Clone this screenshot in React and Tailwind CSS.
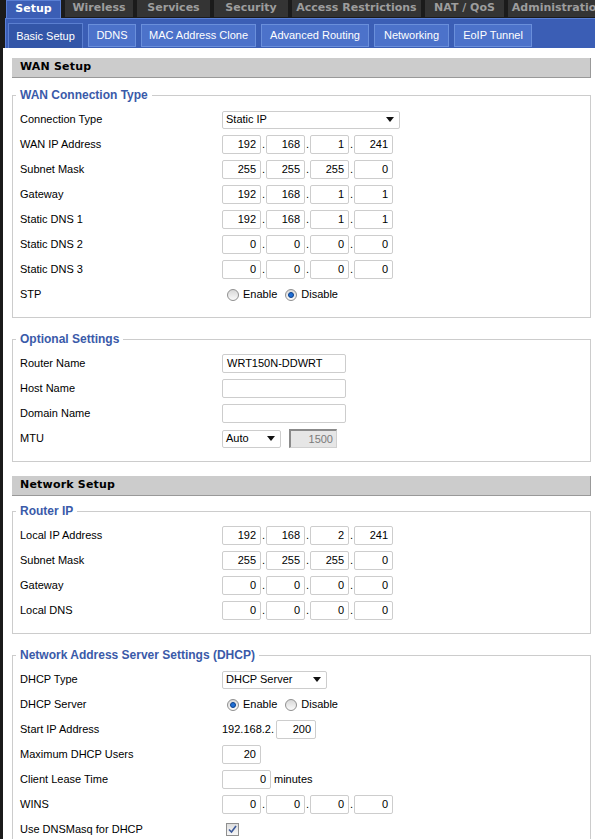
import React from "react";

const topTabs = [
  { name: "Setup", w: "w-[55px]", active: true },
  { name: "Wireless", w: "w-[68px]" },
  { name: "Services", w: "w-[73px]" },
  { name: "Security", w: "w-[74px]" },
  { name: "Access Restrictions", w: "w-[129px]" },
  { name: "NAT / QoS", w: "w-[79px]" },
  { name: "Administration", w: "w-[100px]" },
];

const subTabs = [
  { name: "Basic Setup", w: "w-[75px]", active: true },
  { name: "DDNS", w: "w-[48px]" },
  { name: "MAC Address Clone", w: "w-[115px]" },
  { name: "Advanced Routing", w: "w-[108px]" },
  { name: "Networking", w: "w-[75px]" },
  { name: "EoIP Tunnel", w: "w-[78px]" },
];

const Box = ({ value = "", w = "w-[39px]", right = true }) => (
  <div
    className={`${w} h-[19px] shrink-0 border border-[#cdcdcd] rounded-[2px] bg-white flex items-center px-[4px] ${
      right ? "justify-end" : "justify-start"
    }`}
  >
    {value}
  </div>
);

const IpBoxes = ({ ip }) => (
  <div className="flex items-center">
    {ip.map((v, i) => (
      <React.Fragment key={i}>
        <Box value={v} />
        {i < 3 && <span className="w-[5px] text-center">.</span>}
      </React.Fragment>
    ))}
  </div>
);

const Select = ({ value, w }) => (
  <div
    className={`${w} h-[18px] border border-[#cdcdcd] rounded-[2px] bg-white flex items-center justify-between pl-[3px] pr-[5px]`}
  >
    <span>{value}</span>
    <svg width="8" height="5" viewBox="0 0 8 5">
      <path d="M0 0H8L4 5Z" fill="#111" />
    </svg>
  </div>
);

const Radio = ({ checked }) => (
  <span className="w-[12px] h-[12px] rounded-full border border-[#8f8f8f] bg-linear-to-b from-[#d8d8d8] to-[#fbfbfb] flex items-center justify-center">
    {checked && (
      <span className="w-[6px] h-[6px] rounded-full bg-[#1f6fd6] border border-[#0b3f8a]" />
    )}
  </span>
);

const RadioPair = ({ enabled }) => (
  <div className="flex items-center pl-[5px]">
    <Radio checked={enabled} />
    <span className="ml-[4px] mr-[8px]">Enable</span>
    <Radio checked={!enabled} />
    <span className="ml-[4px]">Disable</span>
  </div>
);

const Row = ({ label, children }) => (
  <div className="flex items-center h-[25px] pl-[4px]">
    <div className="w-[202px] shrink-0">{label}</div>
    {children}
  </div>
);

const Group = ({ title, children, gap }) => (
  <fieldset className={`${gap} border border-[#cccccc] pl-[3px] pr-2 pb-[10px]`}>
    <legend className="px-1 text-[12px] font-bold text-[#3a5aa9] leading-[15px]">
      {title}
    </legend>
    <div className="mt-[4px]">{children}</div>
  </fieldset>
);

const Header = ({ title, gap }) => (
  <div
    className={`${gap} h-[20px] bg-[#cccccc] border-b border-r border-[#999999] pl-[8px] flex items-center text-[11px] font-bold text-black tracking-[0.2px] font-['DejaVu_Sans',sans-serif]`}
  >
    {title}
  </div>
);

export default function App() {
  return (
    <div className="w-[595px] h-[839px] overflow-hidden bg-[#1b1b1b] text-[11px] text-black font-['Liberation_Sans',Arial,sans-serif]">
      {/* main tabs */}
      <div className="flex h-[18px] pl-[6px] gap-[4px] whitespace-nowrap">
        {topTabs.map((t) => (
          <div
            key={t.name}
            className={`${t.w} shrink-0 flex items-center justify-center font-bold text-[11px] font-['DejaVu_Sans',sans-serif] ${
              t.active
                ? "h-[18px] bg-[#3b5eb5] text-white border-t border-l border-r border-[#5a7fd4]"
                : "h-[17px] bg-[#343434] text-[#9d9d9d]"
            }`}
          >
            {t.name}
          </div>
        ))}
      </div>

      {/* sub tabs */}
      <div className="ml-[5px] h-[30px] bg-[#3b5eb5] border-t border-l border-[#5a7fd4] flex items-end pl-[2px] gap-[5px]">
        {subTabs.map((t) => (
          <div
            key={t.name}
            className={`${t.w} shrink-0 flex items-center justify-center text-white text-[11px] ${
              t.active
                ? "h-[25px] bg-[#3356a8] border-t border-l border-r border-[#5b7fd0]"
                : "h-[23px] mb-[1px] bg-[#4c72ca] border border-[#6a8fdb]"
            }`}
          >
            {t.name}
          </div>
        ))}
      </div>

      {/* content */}
      <div className="ml-[3px] bg-white pl-[9px] pr-[4px] pt-[10px] pb-4">
        <Header title="WAN Setup" gap="" />
        <Group title="WAN Connection Type" gap="mt-[10px]">
          <Row label="Connection Type">
            <Select value="Static IP" w="w-[178px]" />
          </Row>
          <Row label="WAN IP Address">
            <IpBoxes ip={["192", "168", "1", "241"]} />
          </Row>
          <Row label="Subnet Mask">
            <IpBoxes ip={["255", "255", "255", "0"]} />
          </Row>
          <Row label="Gateway">
            <IpBoxes ip={["192", "168", "1", "1"]} />
          </Row>
          <Row label="Static DNS 1">
            <IpBoxes ip={["192", "168", "1", "1"]} />
          </Row>
          <Row label="Static DNS 2">
            <IpBoxes ip={["0", "0", "0", "0"]} />
          </Row>
          <Row label="Static DNS 3">
            <IpBoxes ip={["0", "0", "0", "0"]} />
          </Row>
          <Row label="STP">
            <RadioPair enabled={false} />
          </Row>
        </Group>

        <Group title="Optional Settings" gap="mt-[14px]">
          <Row label="Router Name">
            <Box value="WRT150N-DDWRT" w="w-[124px]" right={false} />
          </Row>
          <Row label="Host Name">
            <Box w="w-[124px]" />
          </Row>
          <Row label="Domain Name">
            <Box w="w-[124px]" />
          </Row>
          <Row label="MTU">
            <Select value="Auto" w="w-[59px]" />
            <div className="ml-[8px] w-[48px] h-[19px] bg-[#e6e6e6] border border-[#d0d0d0] border-t-[#8a8a8a] border-l-[#8a8a8a] border-t-2 border-l-2 flex items-center justify-end pr-[3px] text-[#7a7a7a]">
              1500
            </div>
          </Row>
        </Group>

        <Header title="Network Setup" gap="mt-[14px]" />
        <Group title="Router IP" gap="mt-[8px]">
          <Row label="Local IP Address">
            <IpBoxes ip={["192", "168", "2", "241"]} />
          </Row>
          <Row label="Subnet Mask">
            <IpBoxes ip={["255", "255", "255", "0"]} />
          </Row>
          <Row label="Gateway">
            <IpBoxes ip={["0", "0", "0", "0"]} />
          </Row>
          <Row label="Local DNS">
            <IpBoxes ip={["0", "0", "0", "0"]} />
          </Row>
        </Group>

        <Group title="Network Address Server Settings (DHCP)" gap="mt-[14px]">
          <Row label="DHCP Type">
            <Select value="DHCP Server" w="w-[105px]" />
          </Row>
          <Row label="DHCP Server">
            <RadioPair enabled={true} />
          </Row>
          <Row label="Start IP Address">
            <span className="mr-[2px]">192.168.2.</span>
            <Box value="200" w="w-[40px]" />
          </Row>
          <Row label="Maximum DHCP Users">
            <Box value="20" w="w-[39px]" />
          </Row>
          <Row label="Client Lease Time">
            <Box value="0" w="w-[49px]" />
            <span className="ml-[3px]">minutes</span>
          </Row>
          <Row label="WINS">
            <IpBoxes ip={["0", "0", "0", "0"]} />
          </Row>
          <Row label="Use DNSMasq for DHCP">
            <span className="ml-[4px] w-[13px] h-[13px] border border-[#8f8f8f] bg-linear-to-b from-[#dedede] to-[#f7f7f7] flex items-center justify-center">
              <svg width="9" height="9" viewBox="0 0 9 9">
                <path d="M1 4.5L3.5 7L8 1" stroke="#3d5a9a" strokeWidth="1.6" fill="none" />
              </svg>
            </span>
          </Row>
        </Group>
      </div>
    </div>
  );
}
